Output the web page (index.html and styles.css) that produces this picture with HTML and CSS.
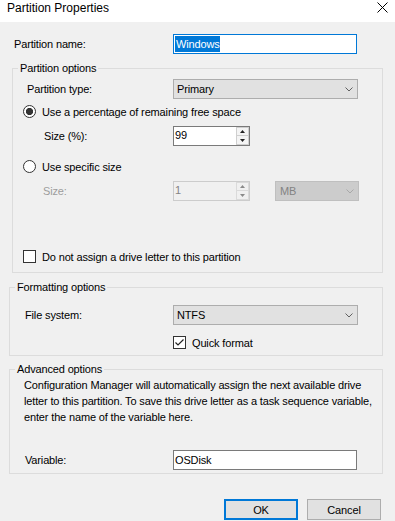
FILE: index.html
```html
<!DOCTYPE html>
<html lang="en">
<head>
    <meta charset="UTF-8">
    <meta name="viewport" content="width=device-width, initial-scale=1.0">
    <title>Partition Properties</title>
    <link rel="stylesheet" href="styles.css">
</head>
<body>

<div class="titlebar">
    <span class="title">Partition Properties</span>
    <svg class="close" width="11" height="11" viewBox="0 0 11 11">
        <path d="M0.5 0.5 L10.5 10.5 M10.5 0.5 L0.5 10.5" stroke="#000" stroke-width="1" fill="none"/>
    </svg>
</div>

<div class="field name-row">
    <label class="lbl">Partition name:</label>
    <div class="textbox wide focused"><span class="selected">Windows</span></div>
</div>

<fieldset class="group group-partition">
    <legend>Partition options</legend>

    <div class="field type-row">
        <label class="lbl">Partition type:</label>
        <div class="select">
            <span>Primary</span>
            <svg class="chevron" width="8" height="5" viewBox="0 0 8 5"><path d="M0.5 0.5 L4 4 L7.5 0.5" stroke="#606060" fill="none"/></svg>
        </div>
    </div>

    <div class="option first">
        <span class="radio checked"></span>
        <span>Use a percentage of remaining free space</span>
    </div>

    <div class="field pct-row">
        <label class="lbl">Size (%):</label>
        <div class="spin">
            <span class="value">99</span>
            <div class="spin-btns">
                <span class="spin-up"><svg width="5" height="3" viewBox="0 0 5 3"><path d="M0 3 L2.5 0 L5 3 Z" fill="#222"/></svg></span>
                <span class="spin-down"><svg width="5" height="3" viewBox="0 0 5 3"><path d="M0 0 L2.5 3 L5 0 Z" fill="#222"/></svg></span>
            </div>
        </div>
    </div>

    <div class="option second">
        <span class="radio"></span>
        <span>Use specific size</span>
    </div>

    <div class="field size-row disabled">
        <label class="lbl">Size:</label>
        <div class="spin">
            <span class="value">1</span>
            <div class="spin-btns">
                <span class="spin-up"><svg width="5" height="3" viewBox="0 0 5 3"><path d="M0 3 L2.5 0 L5 3 Z" fill="#8a8a8a"/></svg></span>
                <span class="spin-down"><svg width="5" height="3" viewBox="0 0 5 3"><path d="M0 0 L2.5 3 L5 0 Z" fill="#8a8a8a"/></svg></span>
            </div>
        </div>
        <div class="select unit">
            <span>MB</span>
            <svg class="chevron" width="8" height="5" viewBox="0 0 8 5"><path d="M0.5 0.5 L4 4 L7.5 0.5" stroke="#a8a8a8" fill="none"/></svg>
        </div>
    </div>

    <div class="option no-letter">
        <span class="check"></span>
        <span>Do not assign a drive letter to this partition</span>
    </div>
</fieldset>

<fieldset class="group group-format">
    <legend>Formatting options</legend>

    <div class="field fs-row">
        <label class="lbl">File system:</label>
        <div class="select">
            <span>NTFS</span>
            <svg class="chevron" width="8" height="5" viewBox="0 0 8 5"><path d="M0.5 0.5 L4 4 L7.5 0.5" stroke="#606060" fill="none"/></svg>
        </div>
    </div>

    <div class="option quick">
        <span class="check">
            <svg width="11" height="11" viewBox="0 0 11 11"><path d="M1.5 5.5 L4 8 L9.5 2.5" stroke="#222" stroke-width="1.2" fill="none"/></svg>
        </span>
        <span>Quick format</span>
    </div>
</fieldset>

<fieldset class="group group-advanced">
    <legend>Advanced options</legend>

    <p class="note">Configuration Manager will automatically assign the next available drive<br>letter to this partition. To save this drive letter as a task sequence variable,<br>enter the name of the variable here.</p>

    <div class="field var-row">
        <label class="lbl">Variable:</label>
        <div class="textbox wide"><span>OSDisk</span></div>
    </div>
</fieldset>

<div class="actions">
    <button class="btn default">OK</button>
    <button class="btn">Cancel</button>
</div>

</body>
</html>
```

FILE: styles.css
```css
/* Global Styles */
body {
    margin: 0;
    background: #f0f0f0;
    font-family: "Liberation Sans", Arial, sans-serif;
    font-size: 11px;
    letter-spacing: -0.15px;
    color: #000;
}

/* Title Bar */
.titlebar {
    height: 22px;
    background: #fff;
    display: flex;
    justify-content: space-between;
    align-items: flex-start;
    padding: 0 7px 0 7px;
}

.title {
    font-size: 12px;
    line-height: 16px;
    letter-spacing: 0;
}

.close {
    margin-top: 2px;
}

/* Rows */
.field {
    display: flex;
    align-items: center;
    height: 20px;
}

.lbl {
    flex: none;
}

.name-row {
    margin-top: 12px;
    padding-left: 14px;
}
.name-row .lbl { width: 159px; }

.type-row { padding-left: 14px; }
.type-row .lbl { width: 146px; }

.pct-row { margin-top: 8px; padding-left: 31px; }
.pct-row .lbl { width: 129px; }

.size-row { margin-top: 8px; padding-left: 30px; }
.size-row .lbl { width: 130px; }

.fs-row { margin-top: 7px; padding-left: 15px; }
.fs-row .lbl { width: 148px; }

.var-row { margin-top: 25px; padding-left: 15px; }
.var-row .lbl { width: 148px; }

/* Group Boxes */
.group {
    margin: 0;
    padding: 3px 0 0 0;
    border: 1px solid #dcdcdc;
    min-inline-size: 0;
    box-sizing: border-box;
}

.group legend {
    padding: 0 2px;
    margin-left: 5px;
    line-height: 15px;
    font-size: 11px;
}

.group-partition {
    margin: 7px 0 0 12px;
    width: 371px;
    padding-bottom: 9px;
}

.group-format {
    margin: 7px 0 0 9px;
    width: 374px;
    padding-bottom: 6px;
}

.group-advanced {
    margin: 6px 0 0 9px;
    width: 374px;
    padding-top: 0;
    padding-bottom: 3px;
}

/* Text Boxes */
.textbox {
    box-sizing: border-box;
    height: 20px;
    border: 1px solid #7a7a7a;
    background: #fff;
    padding: 0 1px;
    display: flex;
    align-items: center;
    line-height: 16px;
}

.textbox.wide {
    width: 184px;
}

.textbox.focused {
    border-color: #0078d7;
}

.selected {
    background: #0078d7;
    color: #fff;
    padding-left: 1px;
}

/* Drop Downs */
.select {
    box-sizing: border-box;
    width: 185px;
    height: 20px;
    border: 1px solid #adadad;
    background: #e1e1e1;
    display: flex;
    align-items: center;
    justify-content: space-between;
    padding: 0 4px 0 3px;
}

.select.unit {
    width: 84px;
    margin-left: 25px;
    background: #cccccc;
    border-color: #bfbfbf;
    color: #838383;
    padding-left: 4px;
}

/* Spin Boxes */
.spin {
    box-sizing: border-box;
    width: 77px;
    height: 20px;
    border: 1px solid #7a7a7a;
    background: #fff;
    display: flex;
}

.spin .value {
    flex: 1;
    padding-left: 1px;
    line-height: 17px;
}

.spin-btns {
    width: 13px;
    display: flex;
    flex-direction: column;
}

.spin-up, .spin-down {
    box-sizing: border-box;
    height: 9px;
    border: 1px solid #cfcfcf;
    background: #f4f4f4;
    display: flex;
    align-items: center;
    justify-content: center;
}

.spin-down {
    border-top: none;
}

.disabled .lbl {
    color: #9d9d9d;
}

.disabled .spin {
    border-color: #cccccc;
    background: #f0f0f0;
    color: #838383;
}

.disabled .spin-up, .disabled .spin-down {
    border-color: #dadada;
    background: #f0f0f0;
}

/* Radio Buttons & Check Boxes */
.option {
    display: flex;
    align-items: center;
    gap: 6px;
    height: 13px;
    padding-left: 10px;
}

.option.first { margin-top: 6px; }
.option.second { margin-top: 14px; }
.option.no-letter { margin-top: 49px; }
.option.quick { margin-top: 11px; padding-left: 163px; }

.radio {
    box-sizing: border-box;
    width: 13px;
    height: 13px;
    border: 1px solid #333;
    border-radius: 50%;
    background: #fff;
}

.radio.checked {
    background: radial-gradient(circle, #333 3.3px, #fff 3.9px);
}

.check {
    box-sizing: border-box;
    width: 13px;
    height: 13px;
    border: 1px solid #333;
    background: #fff;
    display: flex;
}

/* Advanced Note */
.note {
    margin: 0;
    padding-left: 14px;
    line-height: 16px;
    white-space: nowrap;
}

/* Buttons */
.actions {
    display: flex;
    justify-content: flex-end;
    gap: 9px;
    margin-top: 25px;
    padding-right: 14px;
}

.btn {
    box-sizing: border-box;
    width: 74px;
    height: 21px;
    border: 1px solid #adadad;
    background: #e1e1e1;
    font-family: "Liberation Sans", Arial, sans-serif;
    font-size: 11px;
    letter-spacing: -0.15px;
    color: #000;
    padding: 0;
}

.btn.default {
    border: 2px solid #0078d7;
}
```
